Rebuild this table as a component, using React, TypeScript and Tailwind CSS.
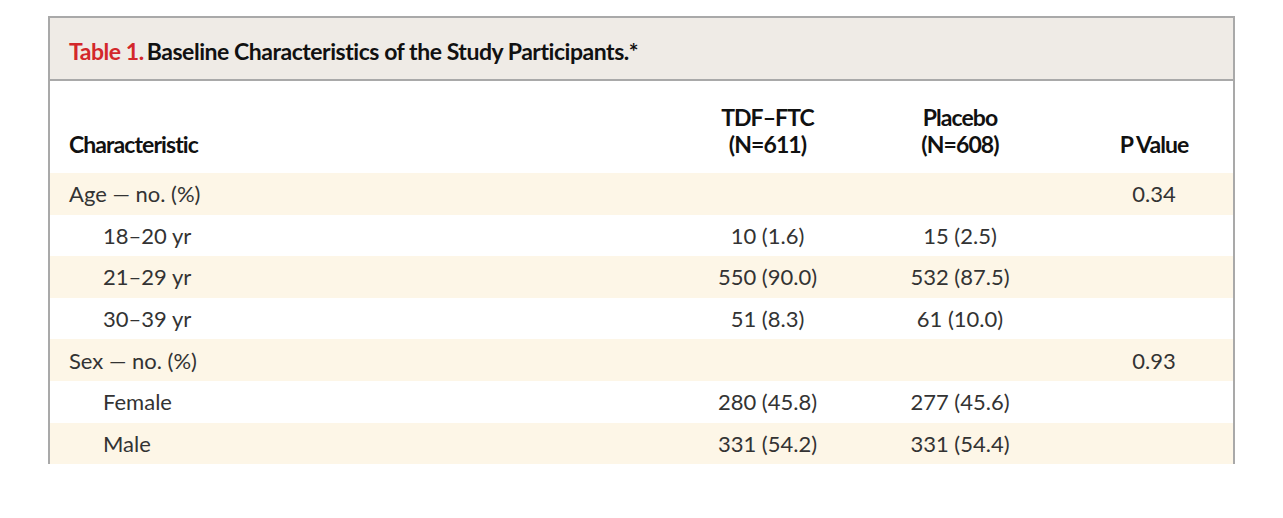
const ROWS = [
  { label: "Age — no. (%)", a: "", b: "", p: "0.34", indent: false },
  { label: "18–20 yr", a: "10 (1.6)", b: "15 (2.5)", p: "", indent: true },
  { label: "21–29 yr", a: "550 (90.0)", b: "532 (87.5)", p: "", indent: true },
  { label: "30–39 yr", a: "51 (8.3)", b: "61 (10.0)", p: "", indent: true },
  { label: "Sex — no. (%)", a: "", b: "", p: "0.93", indent: false },
  { label: "Female", a: "280 (45.8)", b: "277 (45.6)", p: "", indent: true },
  { label: "Male", a: "331 (54.2)", b: "331 (54.4)", p: "", indent: true },
];

const GRID = "grid grid-cols-[620px_195px_190px_1fr]";

export default function App() {
  return (
    <div className="min-h-[518px] bg-white pl-[48px] pt-[16px] font-['Lato','Open_Sans',sans-serif]">
      <div className="w-[1187px] border-x-2 border-t-2 border-[#a9a9a9]">
        <div className="flex h-[63px] items-center border-b-2 border-[#a9a9a9] bg-[#efebe6] pl-[19px] pt-[6px] text-[23px] font-bold tracking-[-0.02em] text-[#111]">
          <span className="text-[#d3272b]">Table 1.</span>
          <span className="ml-[3px]">Baseline Characteristics of the Study Participants.*</span>
        </div>

        <div className={`${GRID} h-[92px] items-end pb-[15px] text-[23px] font-bold leading-[27px] tracking-[-0.04em] text-[#111]`}>
          <div className="pl-[19px]">Characteristic</div>
          <div className="text-center">
            TDF–FTC
            <br />
            (N=611)
          </div>
          <div className="text-center">
            Placebo
            <br />
            (N=608)
          </div>
          <div className="pl-[20px] text-center">P Value</div>
        </div>

        {ROWS.map((row, i) => (
          <div
            key={row.label}
            className={`${GRID} h-[41.6px] items-center text-[22px] text-[#333] ${i % 2 === 0 ? "bg-[#fdf6e7]" : "bg-white"}`}
          >
            <div className={row.indent ? "pl-[53px]" : "pl-[19px]"}>{row.label}</div>
            <div className="text-center">{row.a}</div>
            <div className="text-center">{row.b}</div>
            <div className="pl-[20px] text-center">{row.p}</div>
          </div>
        ))}
      </div>
    </div>
  );
}
